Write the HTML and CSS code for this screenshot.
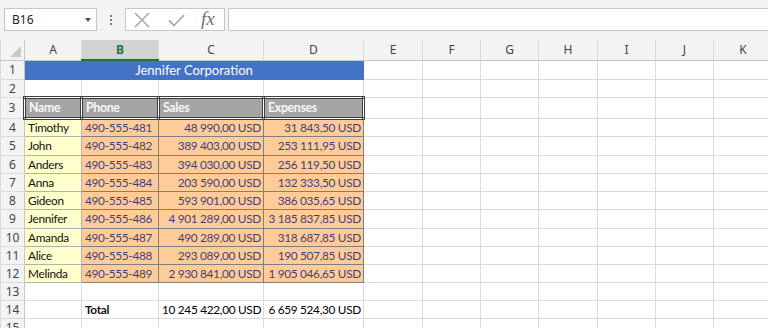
FILE: index.html
```html
<!DOCTYPE html>
<html lang="en">
<head>
  <meta charset="UTF-8" />
  <meta name="viewport" content="width=device-width, initial-scale=1.0" />
  <title>Jennifer Corporation - Sheet1</title>
  <link rel="stylesheet" href="styles.css">
</head>
<body>
  <div class="toolbar">
    <div class="namebox">
      <span>B16</span>
      <span class="caret"></span>
    </div>
    <div class="dots"><i></i><i></i><i></i></div>
    <div class="fx-group">
      <svg class="ico-x" width="16" height="16" viewBox="0 0 16 16">
        <path d="M1 1 L15 15 M15 1 L1 15" stroke="#a9a9a9" stroke-width="1.6" fill="none" />
      </svg>
      <svg class="ico-ok" width="17" height="13" viewBox="0 0 17 13">
        <path d="M1 6.5 L6 11.5 L16 1" stroke="#a9a9a9" stroke-width="1.8" fill="none" />
      </svg>
      <span class="fx">fx</span>
    </div>
    <div class="formula"></div>
  </div>

  <table class="sheet">
    <colgroup>
      <col style="width:24px"><col style="width:57px"><col style="width:77px"><col style="width:105px">
      <col style="width:100px"><col style="width:59px"><col style="width:58px"><col style="width:58px">
      <col style="width:59px"><col style="width:58px"><col style="width:58px"><col style="width:59px">
    </colgroup>
    <tr class="head">
      <th class="corner"><span class="tri"></span></th>
      <th>A</th><th class="sel">B</th><th>C</th><th>D</th><th>E</th><th>F</th>
      <th>G</th><th>H</th><th>I</th><th>J</th><th>K</th>
    </tr>
    <tr class="r19">
      <th>1</th>
      <td colspan="4" class="title">Jennifer Corporation</td>
      <td></td><td></td><td></td><td></td><td></td><td></td><td></td>
    </tr>
    <tr class="r18">
      <th>2</th>
      <td></td><td></td><td></td><td></td><td></td><td></td><td></td><td></td><td></td><td></td><td></td>
    </tr>
    <tr class="r21">
      <th>3</th>
      <td class="check">Name</td><td class="check">Phone</td><td class="check">Sales</td><td class="check">Expenses</td>
      <td></td><td></td><td></td><td></td><td></td><td></td><td></td>
    </tr>
    <tr class="r18">
      <th>4</th>
      <td class="note">Timothy</td><td class="input">490-555-481</td>
      <td class="input num">48 990,00 USD</td><td class="input num">31 843,50 USD</td>
      <td></td><td></td><td></td><td></td><td></td><td></td><td></td>
    </tr>
    <tr class="r19">
      <th>5</th>
      <td class="note">John</td><td class="input">490-555-482</td>
      <td class="input num">389 403,00 USD</td><td class="input num">253 111,95 USD</td>
      <td></td><td></td><td></td><td></td><td></td><td></td><td></td>
    </tr>
    <tr class="r18">
      <th>6</th>
      <td class="note">Anders</td><td class="input">490-555-483</td>
      <td class="input num">394 030,00 USD</td><td class="input num">256 119,50 USD</td>
      <td></td><td></td><td></td><td></td><td></td><td></td><td></td>
    </tr>
    <tr class="r18">
      <th>7</th>
      <td class="note">Anna</td><td class="input">490-555-484</td>
      <td class="input num">203 590,00 USD</td><td class="input num">132 333,50 USD</td>
      <td></td><td></td><td></td><td></td><td></td><td></td><td></td>
    </tr>
    <tr class="r18">
      <th>8</th>
      <td class="note">Gideon</td><td class="input">490-555-485</td>
      <td class="input num">593 901,00 USD</td><td class="input num">386 035,65 USD</td>
      <td></td><td></td><td></td><td></td><td></td><td></td><td></td>
    </tr>
    <tr class="r19">
      <th>9</th>
      <td class="note">Jennifer</td><td class="input">490-555-486</td>
      <td class="input num">4 901 289,00 USD</td><td class="input num">3 185 837,85 USD</td>
      <td></td><td></td><td></td><td></td><td></td><td></td><td></td>
    </tr>
    <tr class="r18">
      <th>10</th>
      <td class="note">Amanda</td><td class="input">490-555-487</td>
      <td class="input num">490 289,00 USD</td><td class="input num">318 687,85 USD</td>
      <td></td><td></td><td></td><td></td><td></td><td></td><td></td>
    </tr>
    <tr class="r18">
      <th>11</th>
      <td class="note">Alice</td><td class="input">490-555-488</td>
      <td class="input num">293 089,00 USD</td><td class="input num">190 507,85 USD</td>
      <td></td><td></td><td></td><td></td><td></td><td></td><td></td>
    </tr>
    <tr class="r18">
      <th>12</th>
      <td class="note">Melinda</td><td class="input">490-555-489</td>
      <td class="input num">2 930 841,00 USD</td><td class="input num">1 905 046,65 USD</td>
      <td></td><td></td><td></td><td></td><td></td><td></td><td></td>
    </tr>
    <tr class="r18">
      <th>13</th>
      <td></td><td></td><td></td><td></td><td></td><td></td><td></td><td></td><td></td><td></td><td></td>
    </tr>
    <tr class="r18">
      <th>14</th>
      <td></td><td class="total">Total</td>
      <td class="num">10 245 422,00 USD</td><td class="num">6 659 524,30 USD</td>
      <td></td><td></td><td></td><td></td><td></td><td></td><td></td>
    </tr>
    <tr class="r18">
      <th>15</th>
      <td></td><td></td><td></td><td></td><td></td><td></td><td></td><td></td><td></td><td></td><td></td>
    </tr>
  </table>
</body>
</html>
```

FILE: styles.css
```css
body {
  margin: 0;
  background: #fff;
  font-family: "Lato", "Open Sans", sans-serif;
  overflow: hidden;
  width: 768px;
  height: 328px;
}

/* formula bar */
.toolbar {
  display: flex;
  align-items: flex-start;
  width: 790px;
  height: 40px;
  padding: 8px 0 0 4px;
  box-sizing: border-box;
  background: #f3f3f3;
}
.namebox {
  width: 93px;
  height: 23px;
  box-sizing: border-box;
  border: 1px solid #c6c6c6;
  background: #fff;
  display: flex;
  align-items: center;
  justify-content: space-between;
  padding: 0 5px 0 7px;
  font-family: "Noto Sans", sans-serif;
  font-size: 12px;
  color: #222;
}
.caret {
  width: 0;
  height: 0;
  border-left: 3.5px solid transparent;
  border-right: 3.5px solid transparent;
  border-top: 4px solid #555;
}
.dots {
  width: 28px;
  height: 23px;
  display: flex;
  flex-direction: column;
  align-items: center;
  justify-content: center;
  gap: 2px;
}
.dots i {
  width: 2px;
  height: 2px;
  background: #7a7a7a;
}
.fx-group {
  width: 100px;
  height: 23px;
  box-sizing: border-box;
  border: 1px solid #c6c6c6;
  background: #fff;
  display: flex;
  align-items: center;
}
.ico-x {
  margin-left: 8px;
}
.ico-ok {
  margin-left: 18px;
  margin-top: 2px;
}
.fx {
  margin-left: 16px;
  font-family: "Liberation Serif", serif;
  font-style: italic;
  font-size: 19px;
  color: #707070;
  line-height: 1;
  margin-top: -3px;
}
.formula {
  flex: 1;
  height: 23px;
  margin-left: 3px;
  box-sizing: border-box;
  border: 1px solid #c6c6c6;
  background: #fff;
}

/* grid */
.sheet {
  border-collapse: collapse;
  table-layout: fixed;
  width: 772px;
}
.sheet td,
.sheet th {
  padding: 0 3px;
  border: 1px solid #dadada;
  white-space: nowrap;
  overflow: hidden;
  font-size: 11.8px;
  letter-spacing: -0.3px;
}
.sheet th {
  background: #f3f3f3;
  font-family: "Noto Sans", sans-serif;
  font-weight: normal;
  color: #444;
  text-align: center;
  padding: 0;
  font-size: 12px;
  letter-spacing: 0;
}
.sheet tr > th:first-child {
  border-right-color: #c6c6c6;
}
.sheet .head th {
  height: 19px;
  border-top: none;
  border-bottom-color: #c6c6c6;
  border-left-color: #dcdcdc;
  border-right-color: #dcdcdc;
}
.sheet .head th.sel {
  background: #d2d2d2;
  color: #217346;
  font-weight: bold;
  border-bottom: 2px solid #217346;
}
.corner {
  position: relative;
}
.tri {
  position: absolute;
  right: 3px;
  bottom: 3px;
  width: 0;
  height: 0;
  border-left: 11px solid transparent;
  border-bottom: 11px solid #c9c9c9;
}
.r18 { height: 18px; }
.r19 { height: 19px; }
.r21 { height: 21px; }

.sheet td.title {
  background: #4472c4;
  color: #fff;
  text-align: center;
  border-color: #4472c4;
  font-size: 13px;
  letter-spacing: 0;
}
.sheet td.check {
  background: #a5a5a5;
  color: #f7f7f7;
  font-weight: bold;
  border: 3px double #3f3f3f;
  font-size: 12.3px;
}
.sheet td.note {
  background: #ffffcc;
  color: #111;
  border-color: #b2b2b2;
}
.sheet td.input {
  background: #ffcc99;
  color: #3f3f76;
  border-color: #7f7f7f;
}
.sheet td.num {
  text-align: right;
  padding-right: 2px;
}
.sheet td.total {
  font-weight: bold;
  color: #111;
}
```
